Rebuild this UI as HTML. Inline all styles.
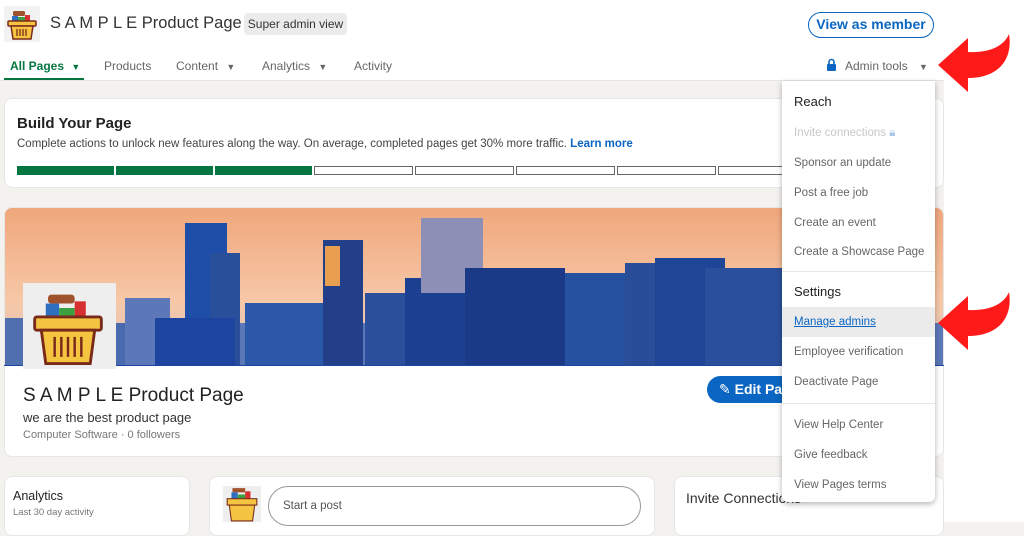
<!DOCTYPE html>
<html><head><meta charset="utf-8"><style>
*{box-sizing:border-box;margin:0;padding:0}
body{width:1024px;height:522px;overflow:hidden;background:#f3f2ef;font-family:"Liberation Sans","DejaVu Sans",sans-serif;position:relative;color:#000}
.abs{position:absolute}
.card{position:absolute;background:#fff;border-radius:8px;border:1px solid #e6e6e6}
.mi{position:absolute;left:12px;font-size:11.5px;color:#666}
</style></head><body>
<div class="abs" style="left:944px;top:0;width:80px;height:522px;background:#fff"></div>
<div class="abs" style="left:0;top:0;width:944px;height:81px;background:#fff;border-bottom:1px solid #e5e5e5"></div>
<!-- logo -->
<svg class="abs" style="left:4px;top:6px" width="36" height="36" viewBox="0 0 36 36">
<rect width="36" height="36" fill="#f2f2f2"/>
<rect x="9" y="5" width="12" height="5" rx="1.5" fill="#a0522d"/>
<rect x="8" y="10" width="6" height="6" fill="#2f6fbf"/><rect x="14" y="11" width="7" height="5" fill="#3aa040"/><rect x="21" y="9" width="5" height="7" fill="#d63030"/>
<rect x="4" y="15" width="28" height="5" rx="1" fill="#f5c542" stroke="#7a2a1a" stroke-width="1.5"/>
<path d="M7 20 L29 20 L27 33 L9 33 Z" fill="#f5c542" stroke="#7a2a1a" stroke-width="1.5"/>
<path d="M13 23v7M16 23v7M19 23v7M22 23v7" stroke="#7a2a1a" stroke-width="1.3"/>
</svg>
<div class="abs" style="left:50px;top:14px;font-size:16.5px;color:#333;white-space:nowrap">S A M P L E Product Page</div>
<div class="abs" style="left:244px;top:13px;width:103px;height:22px;background:#ebebeb;border-radius:4px;font-size:12px;color:#333;text-align:center;line-height:22px">Super admin view</div>
<div class="abs" style="left:808px;top:12px;width:126px;height:26px;border:1.5px solid #0a66c2;border-radius:14px;color:#0a66c2;font-size:14px;font-weight:bold;text-align:center;line-height:23px">View as member</div>
<!-- nav -->
<div class="abs" style="left:10px;top:59px;font-size:12px;font-weight:bold;color:#057642">All Pages <span style="font-size:9px;margin-left:4px">▼</span></div>
<div class="abs" style="left:4px;top:78px;width:80px;height:2px;background:#057642"></div>
<div class="abs" style="left:104px;top:59px;font-size:12px;color:#666">Products</div>
<div class="abs" style="left:176px;top:59px;font-size:12px;color:#666">Content <span style="font-size:9px;margin-left:5px">▼</span></div>
<div class="abs" style="left:262px;top:59px;font-size:12px;color:#666">Analytics <span style="font-size:9px;margin-left:5px">▼</span></div>
<div class="abs" style="left:354px;top:59px;font-size:12px;color:#666">Activity</div>
<svg class="abs" style="left:826px;top:58px" width="11" height="13" viewBox="0 0 11 13"><path d="M3 6V4a2.5 2.5 0 0 1 5 0v2" stroke="#0a66c2" stroke-width="1.6" fill="none"/><rect x="1" y="6" width="9" height="7" rx="1" fill="#0a66c2"/></svg>
<div class="abs" style="left:845px;top:59px;font-size:12px;color:#666">Admin tools <span style="font-size:9px;margin-left:8px">▼</span></div>
<!-- build card -->
<div class="card" style="left:4px;top:98px;width:940px;height:90px"></div>
<div class="abs" style="left:17px;top:115px;font-size:15px;font-weight:bold;color:#222">Build Your Page</div>
<div class="abs" style="left:17px;top:138px;font-size:11.5px;color:#444">Complete actions to unlock new features along the way. On average, completed pages get 30% more traffic. <span style="color:#0a66c2;font-weight:bold">Learn more</span></div>
<div class="abs" style="left:17px;top:166px;width:800px;height:9px;display:flex;gap:2px">
<div style="flex:1;background:#057642"></div><div style="flex:1;background:#057642"></div><div style="flex:1;background:#057642"></div>
<div style="flex:1;border:1px solid #666"></div><div style="flex:1;border:1px solid #666"></div><div style="flex:1;border:1px solid #666"></div><div style="flex:1;border:1px solid #666"></div><div style="flex:1;border:1px solid #666"></div></div>
<!-- banner card -->
<div class="card" style="left:4px;top:207px;width:940px;height:250px;overflow:hidden">
<svg width="940" height="158" style="display:block">
<defs><linearGradient id="sky" x1="0" y1="0" x2="0" y2="1"><stop offset="0" stop-color="#f0a77c"/><stop offset=".6" stop-color="#f6c8a8"/><stop offset="1" stop-color="#d9c3c0"/></linearGradient></defs>
<rect width="940" height="158" fill="url(#sky)"/>
<rect y="115" width="940" height="43" fill="#5a78b8"/>
<g fill="#1d45a0">
<rect x="120" y="90" width="45" height="68" fill="#5c78b8"/>
<rect x="180" y="15" width="42" height="143" fill="#1f4ea8"/>
<rect x="205" y="45" width="30" height="113" fill="#2a4f9a"/>
<rect x="150" y="110" width="80" height="48"/>
<rect x="240" y="95" width="80" height="63" fill="#2b58a8"/>
<rect x="318" y="32" width="40" height="126" fill="#233f8a"/>
<rect x="320" y="38" width="15" height="40" fill="#e8a050"/>
<rect x="360" y="85" width="50" height="73" fill="#2c4f9c"/>
<rect x="400" y="70" width="60" height="88" fill="#1c3f90"/>
<rect x="416" y="10" width="62" height="75" fill="#8e8fb6"/>
<rect x="460" y="60" width="100" height="98" fill="#1a3a88"/>
<rect x="560" y="65" width="90" height="93" fill="#2650a0"/>
<rect x="620" y="55" width="30" height="103" fill="#2a4d98"/>
<rect x="650" y="50" width="70" height="108" fill="#1f4596"/>
<rect x="700" y="60" width="80" height="98" fill="#2a4f9c"/>
<rect x="0" y="110" width="30" height="48" fill="#4f6fae"/>
<rect x="60" y="115" width="60" height="43" fill="#4a6ab0"/>
</g></svg>
</div>
<div class="abs" style="left:4px;top:365px;width:940px;height:1px;background:#1d45a0"></div>
<div class="abs" style="left:23px;top:283px;width:93px;height:86px;background:#eee"></div>
<svg class="abs" style="left:28px;top:290px" width="80" height="76" viewBox="0 0 36 34">
<rect x="9" y="2" width="12" height="4" rx="1.5" fill="#a0522d"/>
<rect x="8" y="6" width="6" height="7" fill="#2f6fbf"/><rect x="14" y="8" width="7" height="5" fill="#3aa040"/><rect x="21" y="5" width="5" height="8" fill="#d63030"/>
<rect x="3" y="12" width="30" height="6" rx="1" fill="#f5c542" stroke="#7a2a1a" stroke-width="1.3"/>
<path d="M6 18 L30 18 L28 33 L8 33 Z" fill="#f5c542" stroke="#7a2a1a" stroke-width="1.3"/>
<path d="M12 21v9M15 21v9M18 21v9M21 21v9M24 21v9" stroke="#7a2a1a" stroke-width="1.1"/>
</svg>
<div class="abs" style="left:23px;top:385px;font-size:19px;color:#222">S A M P L E Product Page</div>
<div class="abs" style="left:23px;top:410px;font-size:13px;color:#333">we are the best product page</div>
<div class="abs" style="left:23px;top:429px;font-size:11px;color:#777">Computer Software · 0 followers</div>
<div class="abs" style="left:707px;top:376px;width:100px;height:27px;background:#0a66c2;border-radius:14px;color:#fff;font-size:14px;font-weight:bold;line-height:27px;padding-left:12px">✎ Edit Page</div>
<!-- bottom cards -->
<div class="card" style="left:4px;top:476px;width:186px;height:60px"></div>
<div class="abs" style="left:13px;top:489px;font-size:12.5px;color:#222">Analytics</div>
<div class="abs" style="left:13px;top:507px;font-size:9.5px;color:#777">Last 30 day activity</div>
<div class="card" style="left:209px;top:476px;width:446px;height:60px"></div>
<svg class="abs" style="left:222px;top:486px" width="40" height="36" viewBox="0 0 36 34"><rect width="36" height="34" fill="#eee"/>
<rect x="9" y="2" width="12" height="4" fill="#a0522d"/><rect x="8" y="6" width="6" height="7" fill="#2f6fbf"/><rect x="14" y="8" width="7" height="5" fill="#3aa040"/><rect x="21" y="5" width="5" height="8" fill="#d63030"/>
<rect x="4" y="12" width="28" height="6" fill="#f5c542" stroke="#7a2a1a"/><path d="M6 18 L30 18 L28 33 L8 33 Z" fill="#f5c542" stroke="#7a2a1a"/></svg>
<div class="abs" style="left:268px;top:486px;width:373px;height:40px;border:1px solid #999;border-radius:20px;font-size:11.5px;color:#555;padding:13px 0 0 14px">Start a post</div>
<div class="card" style="left:674px;top:476px;width:270px;height:60px"></div>
<div class="abs" style="left:686px;top:490px;font-size:14px;color:#333">Invite Connections</div>
<!-- menu -->
<div class="abs" style="left:782px;top:81px;width:153px;height:421px;background:#fff;border-radius:0 0 6px 6px;box-shadow:0 2px 6px rgba(0,0,0,.3)">
<div class="mi" style="top:13px;font-size:13px;color:#222">Reach</div>
<div class="mi" style="top:46px;color:#c8c8c8">Invite connections <span style="color:#a8c8ec">🔒︎</span></div>
<div class="mi" style="top:76px">Sponsor an update</div>
<div class="mi" style="top:106px">Post a free job</div>
<div class="mi" style="top:136px">Create an event</div>
<div class="mi" style="top:165px">Create a Showcase Page</div>
<div class="abs" style="left:0;top:190px;width:153px;height:1px;background:#e8e8e8"></div>
<div class="mi" style="top:203px;font-size:13px;color:#222">Settings</div>
<div class="abs" style="left:0;top:226px;width:153px;height:30px;background:#ebebeb"></div>
<div class="mi" style="top:235px;color:#0a66c2;text-decoration:underline">Manage admins</div>
<div class="mi" style="top:265px">Employee verification</div>
<div class="mi" style="top:295px">Deactivate Page</div>
<div class="abs" style="left:0;top:322px;width:153px;height:1px;background:#e8e8e8"></div>
<div class="mi" style="top:338px">View Help Center</div>
<div class="mi" style="top:368px">Give feedback</div>
<div class="mi" style="top:398px">View Pages terms</div>
</div>
<!-- arrows -->
<svg class="abs" style="left:0;top:0" width="1024" height="522">
<path d="M938 65 L968 38 L968 52 C990 53 1004 46 1009 34 C1013 58 1000 78 968 78 L968 92 Z" fill="#ff1a1a"/>
<path d="M938 323 L968 296 L968 310 C990 311 1004 304 1009 292 C1013 316 1000 336 968 336 L968 350 Z" fill="#ff1a1a"/>
</svg>
</body></html>
